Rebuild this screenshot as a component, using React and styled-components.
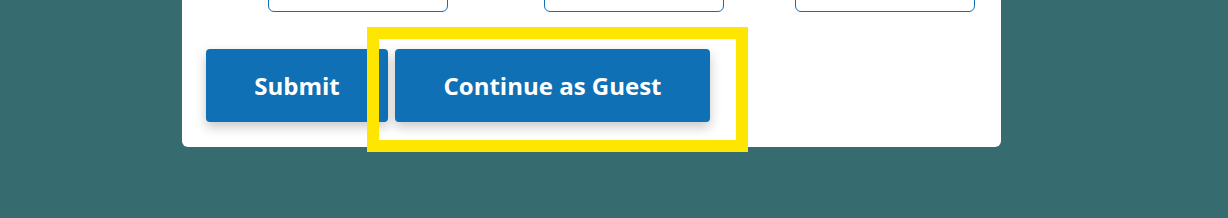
import React from "react";
import styled, { createGlobalStyle } from "styled-components";

const GlobalStyle = createGlobalStyle`
  body {
    margin: 0;
    background-color: #366b6f;
    font-family: "Open Sans", "Noto Sans", sans-serif;
    overflow: hidden;
  }
`;

const Page = styled.div`
  position: relative;
  display: flow-root;
  width: 1228px;
  height: 218px;
`;

const Card = styled.form`
  box-sizing: border-box;
  width: 819px;
  margin: -48px 0 0 182px;
  padding: 20px 24px 25px;
  background-color: #ffffff;
  border-radius: 6px;
`;

const FieldRow = styled.div`
  display: flex;
`;

const Field = styled.div`
  display: flex;
  align-items: flex-start;
  gap: 18px;
`;

const Label = styled.label`
  width: ${({ $width }) => $width}px;
  margin-top: 2px;
  text-align: right;
  font-size: 18px;
  line-height: 24px;
  color: #1d1d1d;
  white-space: nowrap;
`;

const Input = styled.input`
  box-sizing: border-box;
  width: 180px;
  height: 40px;
  border: 1px solid #0f70b5;
  border-radius: 6px;
  background: #fff;
`;

const ButtonRow = styled.div`
  display: flex;
  gap: 7px;
  margin-top: 37px;
`;

const Button = styled.button`
  box-sizing: border-box;
  width: ${({ $width }) => $width}px;
  height: 73px;
  border: none;
  border-radius: 4px;
  background-color: #0f70b5;
  color: #ffffff;
  font-family: "Open Sans", "Noto Sans", sans-serif;
  font-weight: 700;
  font-size: 24px;
  box-shadow: 0 5px 12px rgba(0, 0, 0, 0.22);
  cursor: pointer;
`;

const Highlight = styled.div`
  position: absolute;
  left: 367px;
  top: 27px;
  width: 381px;
  height: 125px;
  box-sizing: border-box;
  border: 12px solid #ffe600;
  pointer-events: none;
`;

const App = () => {
  return (
    <Page>
      <GlobalStyle />
      <Card onSubmit={(e) => e.preventDefault()}>
        <FieldRow>
          <Field>
            <Label $width={44}>DOB:</Label>
            <Input />
          </Field>
          <Field>
            <Label $width={78} />
            <Input />
          </Field>
          <Field>
            <Label $width={53} />
            <Input />
          </Field>
        </FieldRow>
        <ButtonRow>
          <Button $width={182}>Submit</Button>
          <Button $width={315} type="button">
            Continue as Guest
          </Button>
        </ButtonRow>
      </Card>
      <Highlight />
    </Page>
  );
};

export default App;
